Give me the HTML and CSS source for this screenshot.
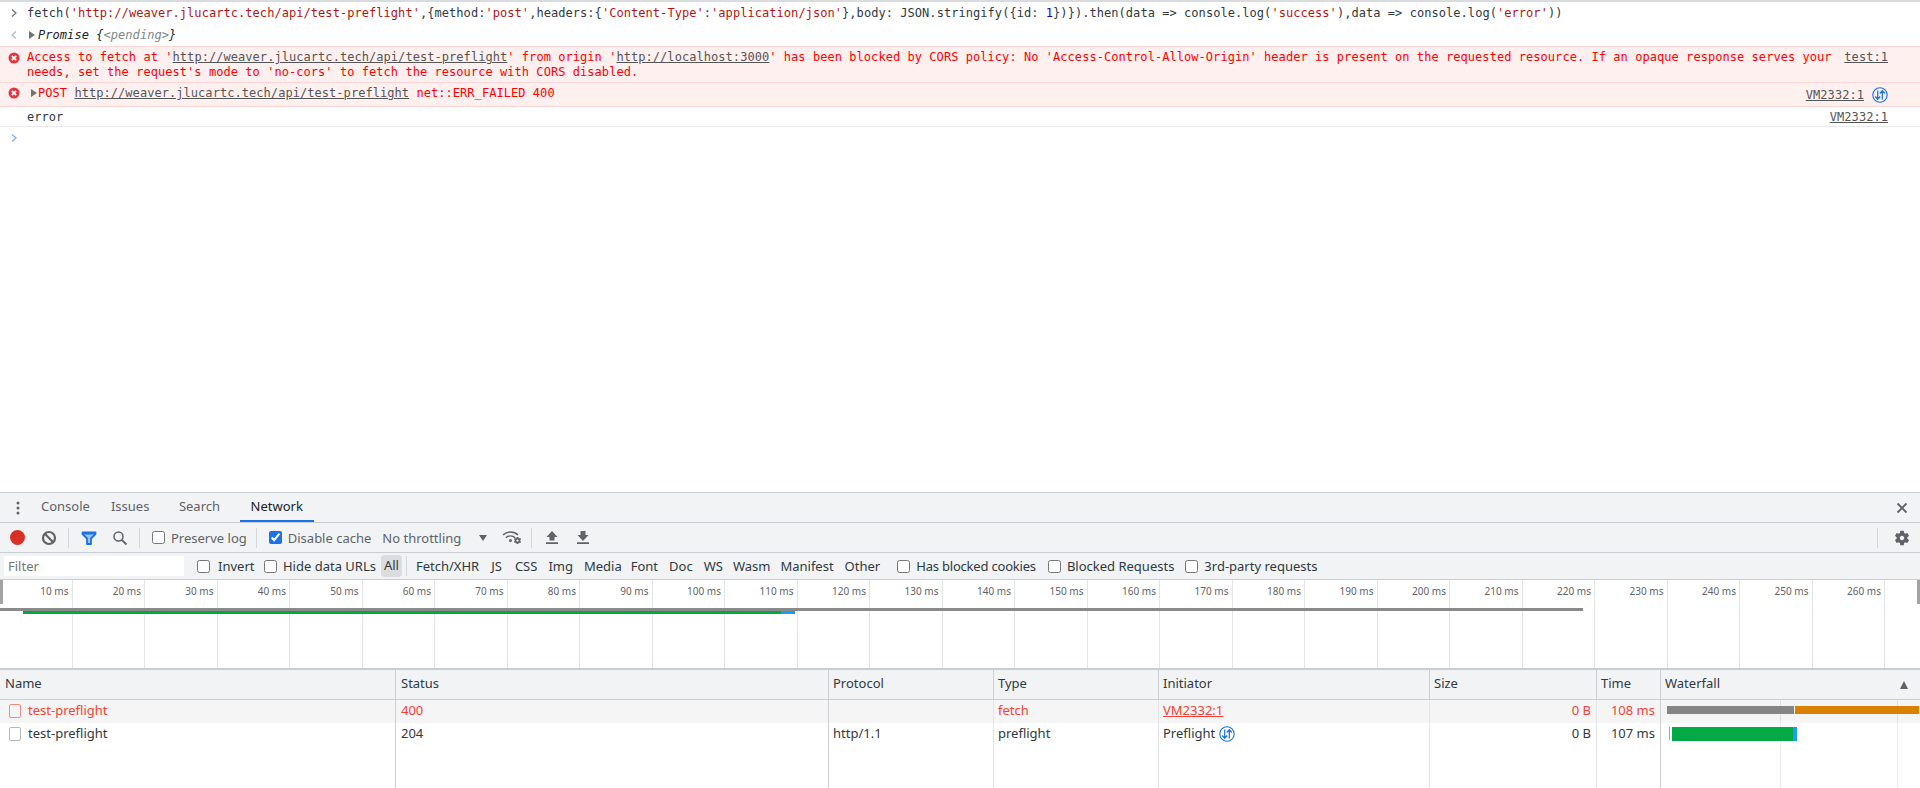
FILE: index.html
```html
<!DOCTYPE html>
<html lang="en">
<head>
    <meta charset="UTF-8">
    <title>DevTools</title>
    <link rel="stylesheet" href="styles.css">
</head>
<body>
    <svg class="sprites" width="0" height="0">
        <symbol id="cors" viewBox="0 0 14 14">
            <circle cx="7" cy="7" r="6.300" fill="none" stroke="#1a73e8" stroke-width="1"/>
            <path d="M5 3V10.500M2.800 8.300 5 10.700l2.200-2.400M9 11V3.500M6.800 5.700 9 3.300l2.200 2.400" fill="none" stroke="#1a73e8" stroke-width="1.100"/>
        </symbol>
        <symbol id="err" viewBox="0 0 12 12">
            <circle cx="6" cy="6" r="5.500" fill="#e0383e"/>
            <path d="M3.800 3.800l4.400 4.400M8.200 3.800 3.800 8.200" stroke="#fff" stroke-width="1.700"/>
        </symbol>
        <symbol id="gear-shape" viewBox="0 0 24 24">
            <path fill="#5f6368" d="M19.140 12.940c.04-.3.06-.61.06-.94 0-.32-.02-.64-.07-.94l2.030-1.580c.18-.14.23-.41.12-.61l-1.920-3.320c-.12-.22-.37-.29-.59-.22l-2.390.96c-.5-.38-1.030-.7-1.620-.94l-.36-2.540c-.04-.24-.24-.41-.48-.41h-3.840c-.24 0-.43.17-.47.41l-.36 2.540c-.59.24-1.130.57-1.620.94l-2.390-.96c-.22-.08-.47 0-.59.22L2.740 8.870c-.12.21-.08.47.12.61l2.030 1.580c-.05.3-.09.63-.09.94s.02.64.07.94l-2.030 1.580c-.18.14-.23.41-.12.61l1.920 3.320c.12.22.37.29.59.22l2.390-.96c.5.38 1.030.7 1.620.94l.36 2.540c.05.24.24.41.48.41h3.840c.24 0 .44-.17.47-.41l.36-2.540c.59-.24 1.130-.56 1.620-.94l2.390.96c.22.08.47 0 .59-.22l1.920-3.320c.12-.22.07-.47-.12-.61l-2.010-1.580zM12 15c-1.650 0-3-1.350-3-3s1.350-3 3-3 3 1.350 3 3-1.350 3-3 3z"/>
        </symbol>
    </svg>

    <main class="console">
        <div class="line">
            <svg class="gutter" width="8" height="10" viewBox="0 0 8 10"><path d="M2 1.500 6 5 2 8.500" fill="none" stroke="#6e6e6e" stroke-width="1.200"/></svg>
            <code>fetch(<i class="str">'http://weaver.jlucartc.tech/api/test-preflight'</i>,{method:<i class="str">'post'</i>,headers:{<i class="str">'Content-Type'</i>:<i class="str">'application/json'</i>},body: JSON.stringify({id: <i class="num">1</i>})}).then(data =&gt; console.log(<i class="str">'success'</i>),data =&gt; console.log(<i class="str">'error'</i>))</code>
        </div>
        <div class="line">
            <svg class="gutter" width="8" height="10" viewBox="0 0 8 10"><path d="M6 1.500 2 5l4 3.500" fill="none" stroke="#b5b5b5" stroke-width="1.200"/></svg>
            <span class="tri"></span>
            <code class="promise">Promise {<span class="muted">&lt;pending&gt;</span>}</code>
        </div>
        <div class="msg error first">
            <svg class="err-icon" width="12" height="12"><use href="#err"/></svg>
            <code class="msg-text">Access to fetch at '<a>http://weaver.jlucartc.tech/api/test-preflight</a>' from origin '<a>http://localhost:3000</a>' has been blocked by CORS policy: No 'Access-Control-Allow-Origin' header is present on the requested resource. If an opaque response serves your<br>needs, set the request's mode to 'no-cors' to fetch the resource with CORS disabled.</code>
            <code class="src">test:1</code>
        </div>
        <div class="msg error second">
            <svg class="err-icon" width="12" height="12"><use href="#err"/></svg>
            <span class="tri"></span>
            <code class="msg-text">POST <a>http://weaver.jlucartc.tech/api/test-preflight</a> net::ERR_FAILED 400</code>
            <code class="src">VM2332:1</code>
            <svg class="cors-icon" width="16" height="16"><use href="#cors"/></svg>
        </div>
        <div class="msg plain">
            <code class="msg-text">error</code>
            <code class="src">VM2332:1</code>
        </div>
        <div class="prompt">
            <svg class="gutter" width="8" height="10" viewBox="0 0 8 10"><path d="M2 1.500 6 5 2 8.500" fill="none" stroke="#7baaf7" stroke-width="1.300"/></svg>
        </div>
    </main>

    <section class="drawer">
        <div class="tabbar">
            <svg class="dots" width="4" height="14" viewBox="0 0 4 14"><circle cx="2" cy="2" r="1.500"/><circle cx="2" cy="7" r="1.500"/><circle cx="2" cy="12" r="1.500"/></svg>
            <a class="tab t-console">Console</a>
            <a class="tab t-issues">Issues</a>
            <a class="tab t-search">Search</a>
            <a class="tab active">Network</a>
            <svg class="close" width="12" height="12" viewBox="0 0 12 12"><path d="M1.500 1.500l9 9M10.500 1.500l-9 9" stroke="#5f6368" stroke-width="1.800"/></svg>
        </div>

        <div class="toolbar">
            <span class="btn"><span class="record"></span></span>
            <span class="btn">
                <svg width="16" height="16" viewBox="0 0 16 16"><circle cx="8" cy="8" r="6" fill="none" stroke="#5f6368" stroke-width="2.200"/><path d="M3.800 3.800l8.400 8.400" stroke="#5f6368" stroke-width="2.200"/></svg>
            </span>
            <span class="sep"></span>
            <span class="btn">
                <svg width="16" height="14" viewBox="0 0 16 14"><path d="M1.500 1.500h13v1.500L10 7.500v5.500H6V7.500L1.500 3z" fill="#9cc2f5" stroke="#1a73e8" stroke-width="1.800" stroke-linejoin="round"/><path d="M1 1h14v2.500H1z" fill="#1a73e8"/></svg>
            </span>
            <span class="btn">
                <svg width="16" height="16" viewBox="0 0 16 16"><circle cx="6.500" cy="6.500" r="4.500" fill="none" stroke="#5f6368" stroke-width="1.500"/><path d="M9.800 9.800l4.700 4.700" stroke="#5f6368" stroke-width="1.800"/></svg>
            </span>
            <span class="sep"></span>
            <label class="check preserve"><input type="checkbox">Preserve log</label>
            <span class="sep"></span>
            <label class="check cache"><input type="checkbox" checked>Disable cache</label>
            <span class="throttle">No throttling</span>
            <span class="caret"></span>
            <svg class="wifi" width="20" height="15" viewBox="0 0 20 15">
                <path d="M1 5C5 1 12 1 16 5M3.800 7.800C6.500 5.500 10.500 5.500 13.200 7.800" fill="none" stroke="#5f6368" stroke-width="1.500"/>
                <circle cx="8.500" cy="10.500" r="1.500" fill="#5f6368"/>
                <use href="#gear-shape" x="11" y="6" width="9" height="9"/>
            </svg>
            <span class="sep wifi-sep"></span>
            <svg class="updown up" width="12" height="13" viewBox="0 0 12 13"><path d="M6 0 11.500 6H8.500V9.500H3.500V6H.5zM0 11.200h12V13H0z" fill="#5f6368"/></svg>
            <svg class="updown down" width="12" height="13" viewBox="0 0 12 13"><path d="M6 10 11.500 4H8.500V0H3.500V4H.5zM0 11.200h12V13H0z" fill="#5f6368"/></svg>
            <span class="spacer"></span>
            <span class="sep"></span>
            <svg class="gear" width="18" height="18"><use href="#gear-shape"/></svg>
        </div>

        <div class="filterbar">
            <div class="filter-input">Filter</div>
            <label class="check invert"><input type="checkbox">Invert</label>
            <label class="check hide-urls"><input type="checkbox">Hide data URLs</label>
            <span class="pill">All</span>
            <span class="sep"></span>
            <span class="kinds">
                <span>Fetch/XHR</span><span>JS</span><span>CSS</span><span>Img</span><span>Media</span><span>Font</span><span>Doc</span><span>WS</span><span>Wasm</span><span>Manifest</span><span>Other</span>
            </span>
            <label class="check blocked-c"><input type="checkbox">Has blocked cookies</label>
            <label class="check blocked-r"><input type="checkbox">Blocked Requests</label>
            <label class="check third"><input type="checkbox">3rd-party requests</label>
        </div>

        <div class="overview">
            <div class="ticks">
                <span>10 ms</span><span>20 ms</span><span>30 ms</span><span>40 ms</span><span>50 ms</span><span>60 ms</span><span>70 ms</span><span>80 ms</span><span>90 ms</span><span>100 ms</span><span>110 ms</span><span>120 ms</span><span>130 ms</span><span>140 ms</span><span>150 ms</span><span>160 ms</span><span>170 ms</span><span>180 ms</span><span>190 ms</span><span>200 ms</span><span>210 ms</span><span>220 ms</span><span>230 ms</span><span>240 ms</span><span>250 ms</span><span>260 ms</span>
            </div>
            <div class="ov-bar ov-gray"></div>
            <div class="ov-bar ov-green"></div>
            <div class="ov-bar ov-blue"></div>
            <div class="handle handle-l"></div>
            <div class="handle handle-r"></div>
        </div>

        <table class="requests">
            <colgroup>
                <col class="c-name"><col class="c-status"><col class="c-proto"><col class="c-type"><col class="c-init"><col class="c-size"><col class="c-time"><col>
            </colgroup>
            <thead>
                <tr>
                    <th>Name</th><th>Status</th><th>Protocol</th><th>Type</th><th>Initiator</th><th>Size</th><th>Time</th>
                    <th class="wf-head">Waterfall<span class="sort"></span></th>
                </tr>
            </thead>
            <tbody>
                <tr class="failed">
                    <td><span class="file"></span>test-preflight</td>
                    <td>400</td>
                    <td></td>
                    <td>fetch</td>
                    <td><a>VM2332:1</a></td>
                    <td class="num-cell">0 B</td>
                    <td class="num-cell">108 ms</td>
                    <td class="wf">
                        <span class="gridline g1"></span><span class="gridline g2"></span>
                        <span class="bar b-wait"></span><span class="bar b-orange"></span>
                    </td>
                </tr>
                <tr>
                    <td><span class="file"></span>test-preflight</td>
                    <td>204</td>
                    <td>http/1.1</td>
                    <td>preflight</td>
                    <td>Preflight<svg class="cors-small" width="16" height="16"><use href="#cors"/></svg></td>
                    <td class="num-cell">0 B</td>
                    <td class="num-cell">107 ms</td>
                    <td class="wf">
                        <span class="gridline g1"></span><span class="gridline g2"></span>
                        <span class="bar b-tick"></span><span class="bar b-green"></span><span class="bar b-blue"></span>
                    </td>
                </tr>
                <tr class="filler">
                    <td></td><td></td><td></td><td></td><td></td><td></td><td></td>
                    <td class="wf"><span class="gridline g1"></span><span class="gridline g2"></span></td>
                </tr>
            </tbody>
        </table>
    </section>
</body>
</html>
```
FILE: styles.css
```css
* {
    box-sizing: border-box;
}

html, body {
    margin: 0;
    height: 788px;
    overflow: hidden;
}

body {
    display: flex;
    flex-direction: column;
    background-color: white;
    color: #303942;
    font-family: "Noto Sans", sans-serif;
    font-size: 13px;
}

.sprites {
    position: absolute;
}

code {
    font-family: "DejaVu Sans Mono", monospace;
    font-size: 12px;
    letter-spacing: 0.052px;
}

a {
    text-decoration: underline;
}

/* console */
.console {
    height: 492px;
    flex: none;
    border-top: 2px solid #d9dbde;
}

.line {
    height: 22px;
    display: flex;
    align-items: center;
    padding-left: 10px;
}

.gutter {
    flex: none;
    margin-right: 9px;
}

.str {
    font-style: normal;
    color: #b31412;
}

.num {
    font-style: normal;
    color: #1c00cf;
}

.muted {
    color: #80868b;
}

.promise {
    font-style: italic;
    color: #222;
}

.tri {
    flex: none;
    width: 0;
    height: 0;
    margin-right: 3px;
    border-left: 6px solid #727272;
    border-top: 4px solid transparent;
    border-bottom: 4px solid transparent;
}

.line .tri {
    margin-left: 2px;
}

.msg {
    display: flex;
    padding-left: 8px;
    padding-right: 32px;
    color: #303942;
}

.error {
    background-color: #fff0f0;
    border-top: 1px solid #ffd6d6;
    color: #f00;
}

.error a {
    color: #555;
}

.first {
    height: 36px;
    padding-top: 3px;
    line-height: 15px;
}

.second {
    height: 25px;
    padding-top: 2px;
    line-height: 16px;
    border-bottom: 1px solid #ffd6d6;
}

.plain {
    height: 20px;
    padding-top: 1px;
    line-height: 18px;
    border-bottom: 1px solid #e8eaed;
}

.err-icon {
    flex: none;
    margin: 2px 7px 0 0;
}

.msg-text {
    flex: 1;
}

.plain .msg-text {
    padding-left: 19px;
}

.second .tri {
    margin: 4px 1px 0 4px;
}

.src {
    color: #555;
    text-decoration: underline;
}

.second .src {
    margin-top: 2px;
}

.cors-icon {
    flex: none;
    margin: 2px 0 0 8px;
}

.prompt {
    padding: 2px 0 0 10px;
    height: 22px;
}

/* drawer */
.drawer {
    flex: 1;
    display: flex;
    flex-direction: column;
    min-height: 0;
    background-color: #f1f3f4;
    border-top: 1px solid #cacdd1;
}

.tabbar {
    height: 30px;
    flex: none;
    display: flex;
    align-items: center;
    border-bottom: 1px solid #cacdd1;
    padding-left: 16px;
}

.dots {
    fill: #5f6368;
}

.tab {
    height: 29px;
    line-height: 27px;
    text-decoration: none;
    color: #5f6368;
}

.t-console {
    margin-left: 21px;
}

.t-issues {
    margin-left: 21px;
}

.t-search {
    margin-left: 29.5px;
}

.tab.active {
    margin-left: 19.5px;
    padding: 0 11px;
    color: #202124;
    border-bottom: 2px solid #1a73e8;
}

.close {
    margin-left: auto;
    margin-right: 12px;
}

.toolbar {
    height: 30px;
    flex: none;
    display: flex;
    align-items: center;
    padding-left: 2px;
    border-bottom: 1px solid #cacdd1;
    color: #5f6368;
}

.btn {
    width: 31px;
    display: flex;
    align-items: center;
    justify-content: center;
}

.record {
    width: 15px;
    height: 15px;
    border-radius: 50%;
    background-color: #d93025;
}

.sep {
    flex: none;
    width: 1px;
    height: 20px;
    margin: 0 4px;
    background-color: #d4d6da;
}

.check {
    display: flex;
    align-items: center;
    white-space: nowrap;
}

.check input {
    width: 13px;
    height: 13px;
    margin: 0 6px 0 0;
    accent-color: #1a73e8;
}

.preserve {
    margin: 0 5px 0 8px;
}

.cache {
    margin-left: 8px;
}

.throttle {
    margin-left: 11px;
}

.caret {
    width: 0;
    height: 0;
    margin-left: 18px;
    border-top: 6px solid #5f6368;
    border-left: 4px solid transparent;
    border-right: 4px solid transparent;
}

.wifi {
    margin-left: 15px;
}

.wifi-sep {
    margin-left: 9px;
}

.up {
    margin-left: 10px;
}

.down {
    margin-left: 19px;
}

.spacer {
    flex: 1;
}

.gear {
    margin: 0 9px 0 11px;
}

.filterbar {
    height: 27px;
    flex: none;
    display: flex;
    align-items: center;
    padding-left: 4px;
    border-bottom: 1px solid #cacdd1;
    color: #303942;
}

.filter-input {
    width: 180px;
    height: 20px;
    line-height: 20px;
    padding-left: 4px;
    background-color: white;
    color: #757575;
}

.invert {
    margin-left: 13px;
}

.invert input {
    margin-right: 8px;
}

.hide-urls {
    margin-left: 9.5px;
}

.pill {
    height: 22px;
    line-height: 21px;
    padding: 0 3px;
    margin-left: 5px;
    border-radius: 4px;
    background-color: #dadce0;
}

.filterbar .sep {
    margin: 0 9px 0 4px;
}

.kinds {
    display: flex;
    gap: 11px;
}

.kinds span:nth-child(2) {
    margin-left: 1px;
}

.kinds span:nth-child(3) {
    margin-left: 2px;
}

.kinds span:nth-child(6) {
    margin-left: -2px;
}

.kinds span:nth-child(9) {
    margin-left: -1px;
}

.kinds span:nth-child(10) {
    margin-left: -1px;
}

.blocked-c {
    margin-left: 17px;
    letter-spacing: -0.2px;
}

.blocked-r {
    margin-left: 12px;
}

.third {
    margin-left: 11px;
}

.overview {
    position: relative;
    height: 90px;
    flex: none;
    background-color: white;
    border-bottom: 2px solid #cacdd1;
}

.ticks {
    display: flex;
    height: 100%;
}

.ticks span {
    flex: none;
    width: 72.5px;
    padding: 4px 3px 0 0;
    text-align: right;
    font-size: 10px;
    color: #5f6368;
    border-right: 1px solid #e3e4e6;
}

.ov-bar {
    position: absolute;
    height: 3px;
}

.ov-gray {
    top: 28px;
    left: 0;
    width: 1583px;
    background-color: #8a8a8a;
}

.ov-green {
    top: 31px;
    left: 23px;
    width: 758px;
    background-color: #00a846;
}

.ov-blue {
    top: 31px;
    left: 781px;
    width: 14px;
    background-color: #1a9cf0;
}

.handle {
    position: absolute;
    top: 0;
    width: 3px;
    height: 24px;
    background-color: #a3a3a3;
}

.handle-l {
    left: 0;
}

.handle-r {
    right: 0;
}

.requests {
    flex: 1;
    width: 100%;
    table-layout: fixed;
    border-collapse: separate;
    border-spacing: 0;
    background-color: white;
}

.c-name {
    width: 396px;
}

.c-status {
    width: 433px;
}

.c-proto {
    width: 165px;
}

.c-type {
    width: 165px;
}

.c-init {
    width: 271px;
}

.c-size {
    width: 167px;
}

.c-time {
    width: 64px;
}

th, td {
    padding: 0 5px;
    border-right: 1px solid #cacdd1;
    text-align: left;
    font-weight: normal;
    white-space: nowrap;
}

th:nth-child(n+3), td:nth-child(n+3) {
    padding-left: 4px;
}

th:last-child, td:last-child {
    border-right: none;
}

th {
    height: 30px;
    padding-bottom: 3px;
    background-color: #f1f3f4;
    border-bottom: 1px solid #cacdd1;
}

td {
    height: 23px;
    padding-bottom: 3px;
    border-right-color: #e3e4e6;
}

td:nth-child(1), td:nth-child(2), td:nth-child(7) {
    border-right-color: #cacdd1;
}

.filler td {
    height: auto;
}

.failed td {
    background-color: #f5f5f5;
    color: #f44336;
}

.file {
    display: inline-block;
    width: 12px;
    height: 14px;
    margin: 0 7px 0 4px;
    vertical-align: -3px;
    border: 1.5px solid #b4b7bb;
    border-radius: 2px;
}

.failed .file {
    border-color: #f28b82;
}

.num-cell {
    text-align: right;
}

.cors-small {
    margin-left: 4px;
    vertical-align: -4px;
}

.wf-head {
    position: relative;
}

.sort {
    position: absolute;
    right: 12px;
    top: 11px;
    width: 0;
    height: 0;
    border-bottom: 8px solid #5f6368;
    border-left: 4px solid transparent;
    border-right: 4px solid transparent;
}

.wf {
    position: relative;
}

.gridline {
    position: absolute;
    top: 0;
    bottom: 0;
    width: 1px;
    background-color: rgba(0, 0, 0, 0.08);
}

.g1 {
    left: 119px;
}

.g2 {
    left: 236px;
}

.bar {
    position: absolute;
}

.b-wait {
    left: 6px;
    top: 6px;
    width: 127px;
    height: 8px;
    background-color: #858585;
}

.b-orange {
    left: 134px;
    top: 6px;
    width: 124px;
    height: 8px;
    background-color: #d98200;
}

.b-tick {
    left: 8px;
    top: 4px;
    width: 1px;
    height: 13px;
    background-color: #aaa;
}

.b-green {
    left: 11px;
    top: 4px;
    width: 121px;
    height: 14px;
    background-color: #00a846;
}

.b-blue {
    left: 132px;
    top: 4px;
    width: 4px;
    height: 14px;
    background-color: #1a9cf0;
}
```
